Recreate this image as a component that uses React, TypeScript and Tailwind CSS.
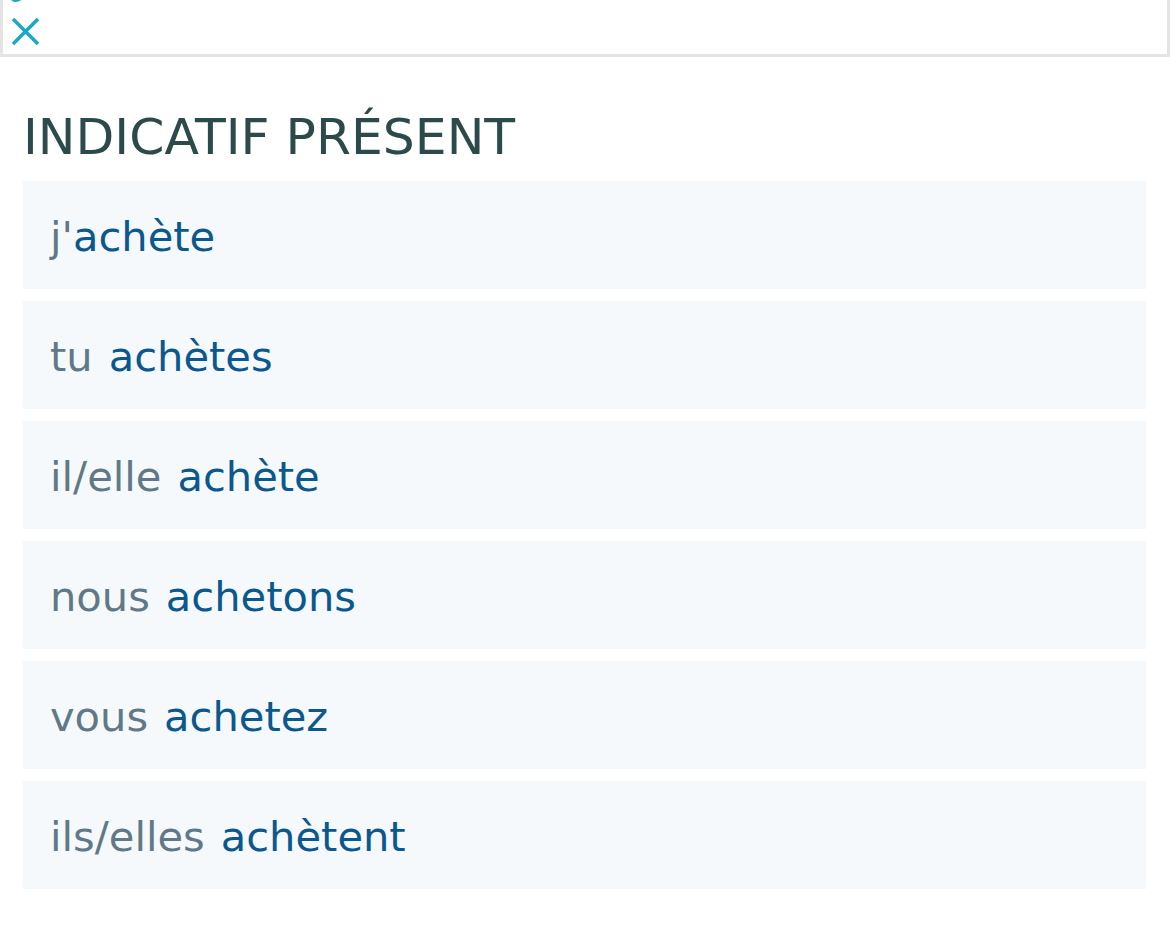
import React from "react";

const rows: [string, string, boolean][] = [
  ["j'", "achète", false],
  ["tu", "achètes", true],
  ["il/elle", "achète", true],
  ["nous", "achetons", true],
  ["vous", "achetez", true],
  ["ils/elles", "achètent", true],
];

export default function App() {
  return (
    <div className="w-[1170px] h-[925px] bg-white overflow-hidden" style={{ fontFamily: '"DejaVu Sans", Verdana, sans-serif' }}>
      <div className="h-[57px] border-x-[3px] border-b-[3px] border-[#e4e4e4] relative">
        <svg className="absolute left-[5px] top-[-4px]" width="16" height="10" viewBox="0 0 16 10">
          <path d="M3 0 Q5 8 14 2" stroke="#1aa9c0" strokeWidth="3" fill="none" strokeLinecap="round" />
        </svg>
        <svg className="absolute left-[7px] top-[16px]" width="30" height="30" viewBox="0 0 30 30">
          <path d="M3 3 L28 28 M28 3 L3 28" stroke="#1ca8c0" strokeWidth="3.6" />
        </svg>
      </div>
      <div className="px-[23px] pr-[24px]">
        <h1 className="mt-[55px] text-[50.4px] leading-none text-[#2d4a4b] font-normal">INDICATIF PRÉSENT</h1>
        <div className="mt-[19px] flex flex-col gap-[12px]">
          {rows.map(([p, v, sp], i) => (
            <div key={i} className="h-[108px] bg-[#f6f9fc] flex items-center pl-[27px] pt-[2px] text-[41.6px] leading-none">
              <span className="text-[#617987]">{p}</span>
              {sp && <span className="w-[16px]" />}
              <span className="text-[#0b588e]">{v}</span>
            </div>
          ))}
        </div>
      </div>
    </div>
  );
}
